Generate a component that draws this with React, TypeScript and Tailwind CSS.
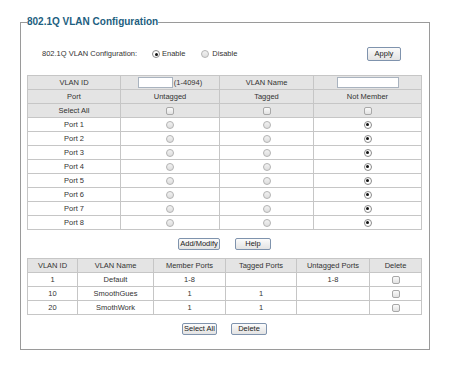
import React from "react";

function Radio({ checked }: { checked?: boolean }) {
  if (checked) {
    return (
      <span className="inline-flex w-[8px] h-[8px] rounded-full border border-[#8a8a8a] bg-white items-center justify-center align-middle">
        <span className="block w-[3px] h-[3px] rounded-full bg-[#111]" />
      </span>
    );
  }
  return (
    <span className="inline-block w-[8px] h-[8px] rounded-full border border-[#b4b4b4] bg-linear-to-b from-[#f2f2f2] to-[#dedede] align-middle" />
  );
}

function Check() {
  return (
    <span className="inline-block w-[8px] h-[8px] rounded-[2px] border border-[#a8a8a8] bg-linear-to-b from-[#fafafa] to-[#e2e2e2] align-middle" />
  );
}

function Btn({ children, w, h = "h-[12px]" }: { children: React.ReactNode; w: string; h?: string }) {
  return (
    <button
      className={`${w} ${h} flex items-center justify-center rounded-[2px] border border-[#7f93ad] bg-linear-to-b from-[#fbfbfb] to-[#e3e3e3] text-[7.5px] leading-none text-[#222] p-0`}
    >
      {children}
    </button>
  );
}

const cell = "border border-[#c6c6c6] text-center p-0 leading-none";

export default function App() {
  const ports = [1, 2, 3, 4, 5, 6, 7, 8];
  const vlans = [
    { id: "1", name: "Default", member: "1-8", tagged: "", untagged: "1-8" },
    { id: "10", name: "SmoothGues", member: "1", tagged: "1", untagged: "" },
    { id: "20", name: "SmothWork", member: "1", tagged: "1", untagged: "" },
  ];
  return (
    <div className="w-[474px] h-[384px] bg-white pt-[16px] pl-[20px] font-['Liberation_Sans',Arial,sans-serif] text-[#333]">
      <fieldset className="w-[409px] border border-[#9a9a9a] pl-[6px] pr-[7px] pb-[14px] m-0">
        <legend className="text-[10px] leading-[12px] font-bold text-[#1d6080] p-0">802.1Q VLAN Configuration</legend>

        <div className="mt-[19px] h-[14px] flex items-center text-[7.5px] leading-none">
          <span className="ml-[15px] w-[110px]">802.1Q VLAN Configuration:</span>
          <span className="ml-[0px] flex items-center">
            <Radio checked />
            <span className="ml-[2px]">Enable</span>
          </span>
          <span className="ml-[16px] flex items-center">
            <Radio />
            <span className="ml-[3px]">Disable</span>
          </span>
          <span className="ml-auto mr-[21px]">
            <Btn w="w-[34px]" h="h-[14px]">Apply</Btn>
          </span>
        </div>

        <table className="mt-[14px] table-fixed border-collapse w-[394px] text-[7.5px]">
          <colgroup>
            <col className="w-[93px]" />
            <col className="w-[99px]" />
            <col className="w-[94px]" />
            <col className="w-[108px]" />
          </colgroup>
          <tbody>
            <tr className="h-[14px] bg-[#e4e4e4]">
              <td className={cell}>VLAN ID</td>
              <td className={cell}>
                <div className="flex items-center justify-center">
                  <span className="inline-block w-[35px] h-[11px] border border-[#a9b3bf] bg-white" />
                  <span className="ml-[1px]">(1-4094)</span>
                </div>
              </td>
              <td className={cell}>VLAN Name</td>
              <td className={cell}>
                <div className="flex items-center justify-center">
                  <span className="inline-block w-[62px] h-[11px] border border-[#a9b3bf] bg-white" />
                </div>
              </td>
            </tr>
            <tr className="h-[14px] bg-[#e4e4e4]">
              <td className={cell}>Port</td>
              <td className={cell}>Untagged</td>
              <td className={cell}>Tagged</td>
              <td className={cell}>Not Member</td>
            </tr>
            <tr className="h-[14px] bg-[#e4e4e4]">
              <td className={cell}>Select All</td>
              <td className={cell}><Check /></td>
              <td className={cell}><Check /></td>
              <td className={cell}><Check /></td>
            </tr>
            {ports.map((p) => (
              <tr key={p} className="h-[14px] bg-white">
                <td className={cell}>Port {p}</td>
                <td className={cell}><Radio /></td>
                <td className={cell}><Radio /></td>
                <td className={cell}><Radio checked /></td>
              </tr>
            ))}
          </tbody>
        </table>

        <div className="mt-[8px] flex justify-center gap-[15px]">
          <Btn w="w-[42px]">Add/Modify</Btn>
          <Btn w="w-[36px]">Help</Btn>
        </div>

        <table className="mt-[8px] table-fixed border-collapse w-[394px] text-[7.5px]">
          <colgroup>
            <col className="w-[50px]" />
            <col className="w-[76px]" />
            <col className="w-[72px]" />
            <col className="w-[71px]" />
            <col className="w-[73px]" />
            <col className="w-[52px]" />
          </colgroup>
          <tbody>
            <tr className="h-[14px] bg-[#e4e4e4]">
              <td className={cell}>VLAN ID</td>
              <td className={cell}>VLAN Name</td>
              <td className={cell}>Member Ports</td>
              <td className={cell}>Tagged Ports</td>
              <td className={cell}>Untagged Ports</td>
              <td className={cell}>Delete</td>
            </tr>
            {vlans.map((v) => (
              <tr key={v.id} className="h-[14px] bg-white">
                <td className={cell}>{v.id}</td>
                <td className={cell}>{v.name}</td>
                <td className={cell}>{v.member}</td>
                <td className={cell}>{v.tagged}</td>
                <td className={cell}>{v.untagged}</td>
                <td className={cell}><Check /></td>
              </tr>
            ))}
          </tbody>
        </table>

        <div className="mt-[8px] flex justify-center gap-[14px]">
          <Btn w="w-[35px]">Select All</Btn>
          <Btn w="w-[36px]">Delete</Btn>
        </div>
      </fieldset>
    </div>
  );
}
